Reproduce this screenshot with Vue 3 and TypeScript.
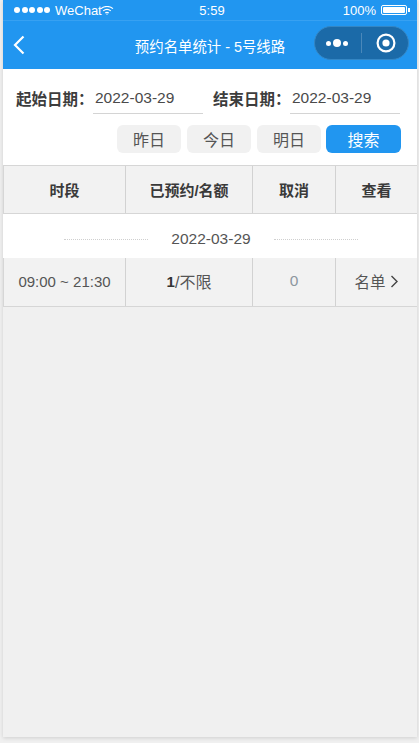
<script setup lang="ts">
const headers: string[] = ['时段', '已预约/名额', '取消', '查看']
const quick: string[] = ['昨日', '今日', '明日']
</script>

<template>
  <div class="stage">
    <main class="phone">
      <header class="top">
        <div class="status">
          <div class="status-left">
            <span class="dots"><i v-for="n in 5" :key="n"></i></span>
            <span>WeChat</span>
            <svg class="wifi" width="14" height="9" viewBox="0 0 14 9" fill="none" stroke="#fff" stroke-width="1.2">
              <path d="M1 2.6C4.5-.2 9.5-.2 13 2.6" />
              <path d="M3.2 4.9c2.3-1.8 5.3-1.8 7.6 0" />
              <path d="M5.3 7c1-.8 2.4-.8 3.4 0" />
              <circle cx="7" cy="8.2" r=".6" fill="#fff" stroke="none" />
            </svg>
          </div>
          <span class="clock">5:59</span>
          <div class="status-right">
            <span>100%</span>
            <span class="battery"><b></b></span>
            <span class="battery-tip"></span>
          </div>
        </div>
        <div class="nav">
          <svg class="back" width="12" height="20" viewBox="0 0 12 20" fill="none" stroke="#fff" stroke-width="2.2">
            <path d="M10.5 1.5 2 10l8.5 8.5" />
          </svg>
          <h1>预约名单统计 - 5号线路</h1>
          <div class="capsule">
            <span class="more"><i></i><i class="big"></i><i></i></span>
            <span class="sep"></span>
            <svg width="22" height="22" viewBox="0 0 22 22">
              <circle cx="11" cy="11" r="8.4" fill="none" stroke="#fff" stroke-width="2.2" />
              <circle cx="11" cy="11" r="3.6" fill="#fff" />
            </svg>
          </div>
        </div>
      </header>

      <section class="filter">
        <div class="dates">
          <div class="field">
            <label>起始日期：</label>
            <span class="value">2022-03-29</span>
          </div>
          <div class="field">
            <label>结束日期：</label>
            <span class="value">2022-03-29</span>
          </div>
        </div>
        <div class="actions">
          <button v-for="q in quick" :key="q" class="btn">{{ q }}</button>
          <button class="btn primary">搜索</button>
        </div>
      </section>

      <div class="row head">
        <div v-for="h in headers" :key="h" class="cell">{{ h }}</div>
      </div>

      <div class="date-row">
        <span class="dash"></span>
        <span>2022-03-29</span>
        <span class="dash"></span>
      </div>

      <div class="row body">
        <div class="cell time">09:00 ~ 21:30</div>
        <div class="cell quota"><b>1</b>/不限</div>
        <div class="cell zero">0</div>
        <div class="cell">
          名单
          <svg class="chev" width="9" height="13" viewBox="0 0 9 13" fill="none" stroke="#444" stroke-width="1.4">
            <path d="M1.5 1 7 6.5 1.5 12" />
          </svg>
        </div>
      </div>
    </main>
  </div>
</template>

<style>
html, body { margin: 0; background: #f0f0f0; }
</style>

<style scoped>
.stage {
  width: 419px;
  height: 743px;
  padding-left: 3px;
  box-sizing: border-box;
  background: #f0f0f0;
  overflow: hidden;
  font-family: "Liberation Sans", "Noto Sans CJK SC", sans-serif;
  color: #444;
}
.phone {
  width: 414px;
  height: 737px;
  background: #f0f0f0;
  box-shadow: 0 1px 4px rgba(0, 0, 0, 0.14);
}
.top { background: #2196f0; color: #fff; height: 69px; }
.status {
  height: 21px;
  display: grid;
  grid-template-columns: 1fr auto 1fr;
  align-items: center;
  padding: 0 7px 0 11px;
  font-size: 13px;
  border-bottom: 1px solid #37a1f2;
  box-sizing: border-box;
}
.status-left { display: flex; align-items: center; gap: 5px; }
.dots { display: flex; gap: 1.5px; }
.dots i { width: 6px; height: 6px; border-radius: 50%; background: #fff; }
.wifi { margin-left: -7px; }
.status-right { display: flex; justify-content: flex-end; align-items: center; gap: 5px; }
.battery {
  width: 26px;
  height: 10px;
  border: 1px solid #fff;
  border-radius: 2px;
  padding: 1px;
  box-sizing: border-box;
  display: flex;
}
.battery b { flex: 1; background: #fff; border-radius: 1px; }
.battery-tip { width: 2px; height: 4px; margin-left: -4px; background: #fff; }
.nav {
  height: 48px;
  display: flex;
  align-items: center;
  padding: 0 8px 0 10px;
}
h1 {
  flex: 1;
  min-width: 0;
  margin: 0;
  padding-left: 81px;
  text-align: center;
  font-size: 14.4px;
  font-weight: 400;
  white-space: nowrap;
}
.capsule {
  flex: none;
  width: 95px;
  height: 34px;
  margin-top: -4px;
  border-radius: 17px;
  background: #1b6aa8;
  border: 1px solid #3486c4;
  box-sizing: border-box;
  display: flex;
  align-items: center;
  padding: 0 11px;
  justify-content: space-between;
}
.more { display: flex; align-items: center; gap: 2px; }
.more i { width: 5px; height: 5px; border-radius: 50%; background: #fff; }
.more i.big { width: 8px; height: 8px; }
.sep { width: 1px; height: 20px; background: #4a88ba; }
.filter {
  height: 96px;
  background: #fff;
  box-sizing: border-box;
  padding: 14px 17px 0 13px;
}
.dates { display: flex; gap: 10px; }
.field { display: flex; flex: 1; align-items: flex-start; height: 31px; }
.field label { font-size: 15.5px; font-weight: 700; color: #3d3d3d; line-height: 33px; white-space: nowrap; width: 77px; flex: none; }
.value {
  flex: 1;
  font-size: 15.5px;
  line-height: 30px;
  height: 30px;
  padding-left: 2px;
  border-bottom: 1px solid #d4d4d4;
  color: #4a4a4a;
}
.actions { display: flex; justify-content: flex-end; gap: 6px; margin: 11px -1px 0 0; }
.btn {
  width: 64px;
  height: 28px;
  border: 0;
  border-radius: 6px;
  background: #f1f1f1;
  color: #555;
  font: inherit;
  font-size: 16px;
  padding: 0;
}
.btn.primary { width: 75px; margin-left: -1px; background: #2196f0; color: #fff; }
.row {
  display: grid;
  grid-template-columns: 122px 127px 83px 81px;
  background: #f2f2f2;
  border-bottom: 1px solid #d6d6d6;
  border-left: 1px solid #d6d6d6;
  box-sizing: border-box;
}
.cell {
  display: flex;
  align-items: center;
  justify-content: center;
  border-right: 1px solid #d2d2d2;
  box-sizing: border-box;
}
.cell:last-child { border-right: 0; }
.head { height: 49px; font-size: 15px; font-weight: 700; color: #3a3a3a; border-top: 1px solid #d6d6d6; }
.body { height: 49px; font-size: 15.5px; color: #555; }
.body .cell { padding-bottom: 2px; }
.body .time { font-size: 15px; }
.body .quota { font-size: 16px; }
.body b { color: #333; font-size: 15px; }
.zero { color: #8d979f; }
.chev { margin-left: 4px; }
.date-row {
  height: 44px;
  padding: 5px 0 0 2px;
  box-sizing: border-box;
  background: #fff;
  display: flex;
  align-items: center;
  justify-content: center;
  gap: 23px;
  font-size: 15.5px;
  color: #555;
}
.dash { width: 84px; margin-top: 2px; border-top: 1px dotted #cfcfcf; }
</style>
